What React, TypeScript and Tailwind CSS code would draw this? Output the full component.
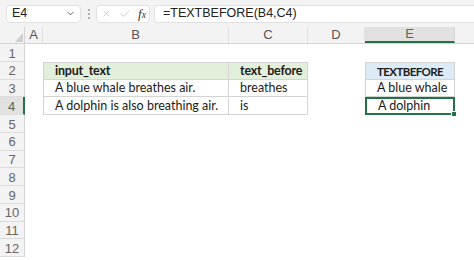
import React from 'react'
import { ChevronDown, X, Check } from 'lucide-react'

const cols = ['A', 'B', 'C', 'D', 'E']
const widths = ['w-[18px]', 'w-[186px]', 'w-[79px]', 'w-[57px]', 'w-[90px]']

type Cell = { text: string; bold?: string; fill?: string; edge?: string; selected?: boolean }

const rows: Record<number, Record<number, Cell>> = {
  2: {
    1: { text: 'input_text', bold: 'font-bold tracking-[-0.2px]', fill: 'bg-[#e2efda]', edge: 'border-t border-l' },
    2: { text: 'text_before', bold: 'font-bold tracking-[-0.2px]', fill: 'bg-[#e2efda]', edge: 'border-t' },
    4: { text: 'TEXTBEFORE', bold: 'font-bold text-[11.5px] tracking-[-0.6px]', fill: 'bg-[#ddebf7]', edge: 'border-t border-l' },
  },
  3: {
    1: { text: 'A blue whale breathes air.', edge: 'border-l' },
    2: { text: 'breathes' },
    4: { text: 'A blue whale', edge: 'border-l' },
  },
  4: {
    1: { text: 'A dolphin is also breathing air.', edge: 'border-l' },
    2: { text: 'is' },
    4: { text: 'A dolphin', selected: true },
  },
}

const FormulaBar = () => (
  <div className="h-[27px] flex items-center bg-[#f3f3f3] font-['Liberation_Sans',sans-serif] text-[12.5px] text-[#222]">
    <div className="ml-[6px] w-[75px] h-[18px] bg-white border border-[#e1e1e1] rounded-[4px] flex items-center justify-between pl-[5px] pr-[4px]">
      <span>E4</span>
      <ChevronDown className="w-[11px] h-[11px] text-[#555]" strokeWidth={2} />
    </div>
    <div className="ml-[5px] w-[6px] flex flex-col items-center gap-[2px]">
      <span className="w-[2px] h-[2px] bg-[#999] rounded-full" />
      <span className="w-[2px] h-[2px] bg-[#999] rounded-full" />
      <span className="w-[2px] h-[2px] bg-[#999] rounded-full" />
    </div>
    <div className="ml-[4px] w-[54px] h-[18px] bg-white border border-[#e1e1e1] rounded-[4px] flex items-center gap-[7px] pl-[4px]">
      <X className="w-[11px] h-[11px] text-[#bdbdbd]" strokeWidth={1.5} />
      <Check className="w-[12px] h-[12px] text-[#bdbdbd]" strokeWidth={1.5} />
      <span className="font-['Liberation_Serif',serif] italic text-[13px] text-[#333]">
        f<span className="text-[10px]">x</span>
      </span>
    </div>
    <div className="ml-[4px] flex-1 h-[18px] bg-white border border-[#e1e1e1] border-r-0 rounded-l-[4px] flex items-center pl-[8px]">
      =TEXTBEFORE(B4,C4)
    </div>
  </div>
)

const HeaderRow = () => (
  <div className="h-[17px] flex bg-[#f3f3f3] border-b border-[#d4d4d4] font-['Liberation_Sans',sans-serif] text-[13px] text-[#555]">
    <div className="w-[25px] relative border-r border-[#d4d4d4]">
      <svg className="absolute left-[15px] top-[6px]" width="8" height="9" viewBox="0 0 8 9">
        <polygon points="8,0 8,9 0,9" fill="#cfcfcf" />
      </svg>
    </div>
    {cols.map((c, i) => (
      <div
        key={c}
        className={`${widths[i]} flex items-center justify-center border-r ${
          c === 'E' ? 'bg-[#e1e1e1] border-[#d4d4d4] border-b-2 border-b-[#217346] text-[#4d6b58]' : 'border-[#e0e0e0]'
        }`}
      >
        {c}
      </div>
    ))}
    <div className="flex-1" />
  </div>
)

const SheetRow = ({ n }: { n: number }) => {
  const data = rows[n] || {}
  return (
    <div className="h-[17.75px] flex">
      <div
        className={`w-[25px] flex items-center justify-center pt-[2px] border-b border-[#dcdcdc] font-['Liberation_Sans',sans-serif] text-[13px] ${
          n === 4 ? 'bg-[#e1e1e1] border-r-2 border-r-[#217346] text-[#4d6b58]' : 'bg-[#f3f3f3] border-r border-r-[#d4d4d4] text-[#666]'
        }`}
      >
        {n}
      </div>
      {widths.map((w, i) => {
        const cell = data[i]
        if (!cell) return <div key={i} className={w} />
        return (
          <div
            key={i}
            className={`${w} relative flex items-center pl-[11px] pt-[1px] whitespace-nowrap text-[#1b1b1b] ${
              cell.selected
                ? 'border-2 border-[#217346] pl-[10px]'
                : `border-r border-b border-[#d4d4d4] ${cell.edge || ''}`
            } ${cell.fill || ''} ${cell.bold || ''}`}
          >
            {cell.text}
            {cell.selected && (
              <span className="absolute -right-[4px] -bottom-[4px] w-[6px] h-[6px] bg-[#217346] border border-white" />
            )}
          </div>
        )
      })}
      <div className="flex-1" />
    </div>
  )
}

export default function App() {
  return (
    <div className="w-[474px] h-[260px] overflow-hidden bg-white">
      <FormulaBar />
      <HeaderRow />
      <div className="font-['Lato',sans-serif] text-[12.5px]">
        {Array.from({ length: 12 }, (_, i) => (
          <SheetRow key={i} n={i + 1} />
        ))}
      </div>
    </div>
  )
}
